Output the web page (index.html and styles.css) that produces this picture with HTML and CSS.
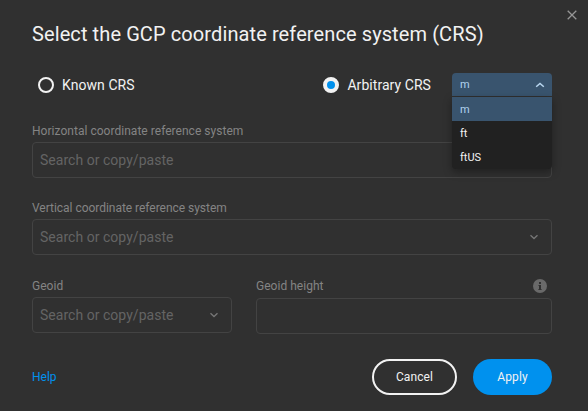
FILE: index.html
```html
<!DOCTYPE html>
<html lang="en">
<head>
<meta charset="utf-8">
<title>Coordinate reference system</title>
<link rel="stylesheet" href="styles.css">
</head>
<body>
<main class="dialog">
  <button class="close" aria-label="Close"><svg width="10" height="10" viewBox="0 0 10 10"><path d="M.7.7l8.6 8.6M9.3.7L.7 9.3"/></svg></button>
  <h1 class="title">Select the GCP coordinate reference system (CRS)</h1>
  <div class="modes">
    <label class="radio"><span class="dot"></span>Known CRS</label>
    <div class="arbitrary">
      <label class="radio"><span class="dot dot-on"></span>Arbitrary CRS</label>
      <div class="select">
        <div class="select-head">m<svg class="chevron" width="10" height="6" viewBox="0 0 10 6"><path d="M1.2 4.8L5 1.4l3.8 3.4"/></svg></div>
        <ul class="menu">
          <li class="option selected">m</li>
          <li class="option">ft</li>
          <li class="option">ftUS</li>
        </ul>
      </div>
    </div>
  </div>
  <section class="field">
    <div class="label">Horizontal coordinate reference system</div>
    <div class="input">Search or copy/paste</div>
  </section>
  <section class="field">
    <div class="label vertical">Vertical coordinate reference system</div>
    <div class="input">Search or copy/paste<svg class="chevron" width="10" height="6" viewBox="0 0 10 6"><path d="M1.5 1.3L5 4.5l3.5-3.2"/></svg></div>
  </section>
  <div class="geoid">
    <section class="field">
      <div class="label">Geoid</div>
      <div class="input">Search or copy/paste<svg class="chevron" width="10" height="6" viewBox="0 0 10 6"><path d="M1.5 1.3L5 4.5l3.5-3.2"/></svg></div>
    </section>
    <section class="field height">
      <div class="label">Geoid height<svg class="info" width="14" height="14" viewBox="0 0 14 14"><circle cx="7" cy="7" r="7"/><path d="M6 3h2v2H6zM5.5 6H8v4h.6v1H5.4v-1H6V7h-.5z"/></svg></div>
      <div class="input"></div>
    </section>
  </div>
  <footer class="actions">
    <a class="help">Help</a>
    <button class="button cancel">Cancel</button>
    <button class="button apply">Apply</button>
  </footer>
</main>
</body>
</html>
```
FILE: styles.css
```css
* { box-sizing: border-box; }
body { margin: 0; background: #303030; font-family: Roboto, sans-serif; color: #f2f2f2; }
.dialog { position: relative; width: 588px; height: 411px; padding: 20px 36px 0 32px; overflow: hidden; }
button { font-family: inherit; padding: 0; }
svg { display: block; fill: none; }
.close { position: absolute; top: 10px; right: 11px; border: 0; background: none; }
.close svg { stroke: #969696; stroke-width: 1.3; }
.title { margin: 0; font-size: 20px; line-height: 28px; font-weight: 400; letter-spacing: .1px; white-space: nowrap; }
.modes { display: flex; justify-content: space-between; height: 24px; margin-top: 25px; padding-left: 6px; }
.radio { display: flex; align-items: center; gap: 8px; font-size: 14px; line-height: 24px; letter-spacing: .06px; }
.dot { width: 16px; height: 16px; border: 2px solid #f2f2f2; border-radius: 50%; }
.dot-on { border-width: 4px; background: #0091ee; }
.arbitrary { display: flex; gap: 21px; }
.select { position: relative; width: 100px; font-size: 11px; }
.select-head { display: flex; align-items: center; justify-content: space-between; height: 23px; padding: 0 7px 0 8px; border-radius: 4px 4px 0 0; background: #39546e; color: #b0d2ef; }
.chevron { stroke: #777; stroke-width: 1.3; }
.select .chevron { stroke: #b9d7f0; stroke-width: 1.5; }
.menu { position: absolute; z-index: 1; top: 24px; left: 0; width: 100px; margin: 0; padding: 0; list-style: none; background: #212121; border-radius: 0 0 4px 4px; box-shadow: 0 3px 8px rgba(0, 0, 0, .35); }
.option { height: 24px; padding: 1px 0 0 8px; line-height: 24px; }
.selected { background: #39546e; color: #b0d2ef; }
.field { margin-top: 26px; }
.field + .field { margin-top: 22px; }
.label { display: flex; align-items: center; justify-content: space-between; height: 16px; margin-bottom: 3px; font-size: 12px; line-height: 16px; letter-spacing: .03px; color: #848484; }
.vertical { letter-spacing: -.03px; }
.input { display: flex; align-items: center; justify-content: space-between; height: 36px; padding: 0 12px 0 7px; border: 1px solid #434343; border-radius: 4px; font-size: 14px; letter-spacing: .03px; color: #646464; }
.geoid { display: grid; grid-template-columns: 200px 296px; gap: 24px; margin-top: 23px; }
.geoid .field { margin: 0; }
.height .label { margin-bottom: 4px; }
.info { margin-right: 5px; }
.info circle { fill: #696969; }
.info path { fill: #303030; }
.actions { display: flex; align-items: center; margin-top: 25px; }
.help { margin-right: auto; font-size: 12px; color: #0091ee; }
.button { height: 36px; border-radius: 18px; font-size: 12px; letter-spacing: .1px; color: #f2f2f2; }
.cancel { width: 85px; margin-right: 16px; border: 2px solid #f2f2f2; background: none; }
.apply { width: 79px; border: 0; background: #0091ee; }
```
